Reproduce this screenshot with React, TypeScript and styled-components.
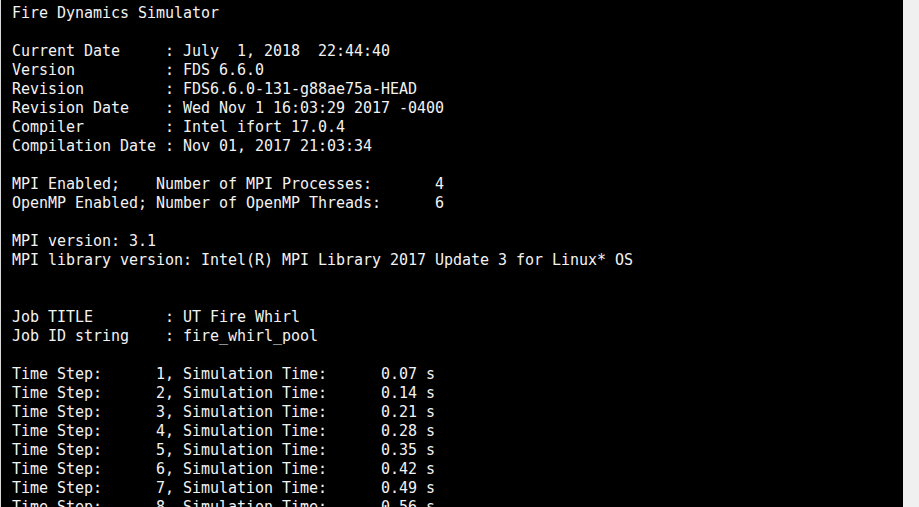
import React from "react";
import styled, { createGlobalStyle } from "styled-components";

const Global = createGlobalStyle`
  html, body { margin: 0; padding: 0; background: #000; overflow: hidden; }
  #root { width: 919px; height: 507px; }
`;

const Window = styled.div`
  display: flex;
  width: 919px;
  height: 507px;
  overflow: hidden;
`;

const Console = styled.div`
  flex: 1;
  background: #000;
  border-left: 1px solid #d9d9d9;
  padding: 4px 0 0 11px;
  overflow: hidden;
`;

const Line = styled.pre`
  margin: 0;
  height: 19px;
  line-height: 19px;
  font-family: "DejaVu Sans Mono", "Liberation Mono", monospace;
  font-size: 15px;
  letter-spacing: -0.03px;
  color: #f2f2f2;
  white-space: pre;
`;

const Scrollbar = styled.div`
  width: 16px;
  flex: none;
  background: #f0f0f0;
`;

const lines: string[] = [
  "Fire Dynamics Simulator",
  "",
  "Current Date     : July  1, 2018  22:44:40",
  "Version          : FDS 6.6.0",
  "Revision         : FDS6.6.0-131-g88ae75a-HEAD",
  "Revision Date    : Wed Nov 1 16:03:29 2017 -0400",
  "Compiler         : Intel ifort 17.0.4",
  "Compilation Date : Nov 01, 2017 21:03:34",
  "",
  "MPI Enabled;    Number of MPI Processes:       4",
  "OpenMP Enabled; Number of OpenMP Threads:      6",
  "",
  "MPI version: 3.1",
  "MPI library version: Intel(R) MPI Library 2017 Update 3 for Linux* OS",
  "",
  "",
  "Job TITLE        : UT Fire Whirl",
  "Job ID string    : fire_whirl_pool",
  "",
  "Time Step:      1, Simulation Time:      0.07 s",
  "Time Step:      2, Simulation Time:      0.14 s",
  "Time Step:      3, Simulation Time:      0.21 s",
  "Time Step:      4, Simulation Time:      0.28 s",
  "Time Step:      5, Simulation Time:      0.35 s",
  "Time Step:      6, Simulation Time:      0.42 s",
  "Time Step:      7, Simulation Time:      0.49 s",
  "Time Step:      8, Simulation Time:      0.56 s",
];

export default function App() {
  return (
    <>
      <Global />
      <Window>
        <Console>
          {lines.map((l, i) => (
            <Line key={i}>{l || " "}</Line>
          ))}
        </Console>
        <Scrollbar />
      </Window>
    </>
  );
}
